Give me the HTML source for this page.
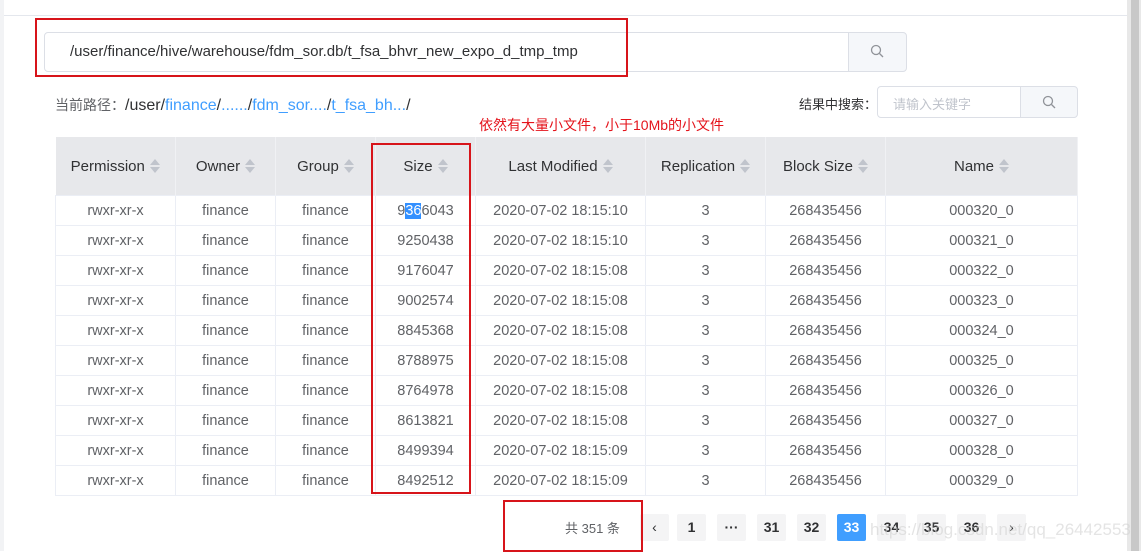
<!DOCTYPE html><html><head><meta charset="utf-8"><style>
body{margin:0;width:1141px;height:551px;overflow:hidden;background:#fff;font-family:"Liberation Sans","Noto Sans CJK SC",sans-serif;position:relative;color:#606266}
.a{position:absolute}
table{border-collapse:collapse;position:absolute;left:55px;top:137px;width:1022px;table-layout:fixed}
th{background:#e7e8eb;height:58px;font-weight:normal;color:#303133;font-size:15px;border-right:1px solid #f0f1f4;padding:0}
td{height:29px;border:1px solid #ebeef5;text-align:center;font-size:14.5px;color:#606266;padding:0}
.s{display:inline-block;width:10px;height:14px;vertical-align:middle;margin-left:5px;position:relative;top:-1px}
.s:before{content:"";position:absolute;left:0;top:0;border-left:5px solid transparent;border-right:5px solid transparent;border-bottom:6px solid #c0c4cc}
.s:after{content:"";position:absolute;left:0;top:8px;border-left:5px solid transparent;border-right:5px solid transparent;border-top:6px solid #c0c4cc}
.pg{position:absolute;top:514px;width:29px;height:27px;background:#f4f4f5;border-radius:2px;font-size:14px;font-weight:bold;color:#303133;text-align:center;line-height:27px}
.rb{position:absolute;border:2px solid #d7141a}
</style></head><body>
<div class="a" style="left:0;top:0;width:4px;height:551px;background:#f2f3f5"></div>
<div class="a" style="left:4px;top:15px;width:1123px;height:1px;background:#e4e7ed"></div>
<div class="a" style="left:1127px;top:0;width:14px;height:551px;background:#e8e8e8"></div>
<div class="a" style="left:1131px;top:0;width:8px;height:551px;background:#c8c8c8"></div>
<div class="a" style="left:44px;top:32px;width:803px;height:38px;border:1px solid #dcdfe6;border-radius:4px 0 0 4px"></div>
<div class="a" style="left:70px;top:43px;font-size:15px;color:#303133">/user/finance/hive/warehouse/fdm_sor.db/t_fsa_bhvr_new_expo_d_tmp_tmp</div>
<div class="a" style="left:848px;top:32px;width:57px;height:38px;border:1px solid #dcdfe6;background:#f5f7fa;border-radius:0 4px 4px 0"></div>
<svg class="a" style="left:870px;top:44px" width="14" height="14"><circle cx="6" cy="6" r="4.5" fill="none" stroke="#909399" stroke-width="1.3"/><path d="M9.5 9.5L13 13" stroke="#909399" stroke-width="1.3"/></svg>
<div class="a" style="left:55px;top:95px;font-size:14px;color:#606266">当前路径：<span style="font-size:16px;color:#303133">/user/<span style="color:#409eff">finance</span>/<span style="color:#409eff">......</span>/<span style="color:#409eff">fdm_sor....</span>/<span style="color:#409eff">t_fsa_bh...</span>/</span></div>
<div class="a" style="left:479px;top:115px;font-size:14px;color:#e4131b">依然有大量小文件，小于10Mb的小文件</div>
<div class="a" style="left:799px;top:94px;font-size:13px;color:#303133">结果中搜索：</div>
<div class="a" style="left:877px;top:86px;width:143px;height:30px;border:1px solid #dcdfe6;border-radius:4px 0 0 4px"></div>
<div class="a" style="left:893px;top:94px;font-size:13px;color:#c0c4cc">请输入关键字</div>
<div class="a" style="left:1020px;top:86px;width:56px;height:30px;border:1px solid #dcdfe6;background:#f5f7fa;border-radius:0 4px 4px 0"></div>
<svg class="a" style="left:1042px;top:95px" width="14" height="14"><circle cx="6" cy="6" r="4.5" fill="none" stroke="#909399" stroke-width="1.3"/><path d="M9.5 9.5L13 13" stroke="#909399" stroke-width="1.3"/></svg>
<table><colgroup><col style="width:120px"><col style="width:100px"><col style="width:100px"><col style="width:100px"><col style="width:170px"><col style="width:120px"><col style="width:120px"><col style="width:192px"></colgroup>
<tr><th>Permission<i class="s"></i></th><th>Owner<i class="s"></i></th><th>Group<i class="s"></i></th><th>Size<i class="s"></i></th><th>Last Modified<i class="s"></i></th><th>Replication<i class="s"></i></th><th>Block Size<i class="s"></i></th><th>Name<i class="s"></i></th></tr>
<tr><td>rwxr-xr-x</td><td>finance</td><td>finance</td><td>9<span style="background:#3390ff;color:#fff">36</span>6043</td><td>2020-07-02 18:15:10</td><td>3</td><td>268435456</td><td>000320_0</td></tr>
<tr><td>rwxr-xr-x</td><td>finance</td><td>finance</td><td>9250438</td><td>2020-07-02 18:15:10</td><td>3</td><td>268435456</td><td>000321_0</td></tr>
<tr><td>rwxr-xr-x</td><td>finance</td><td>finance</td><td>9176047</td><td>2020-07-02 18:15:08</td><td>3</td><td>268435456</td><td>000322_0</td></tr>
<tr><td>rwxr-xr-x</td><td>finance</td><td>finance</td><td>9002574</td><td>2020-07-02 18:15:08</td><td>3</td><td>268435456</td><td>000323_0</td></tr>
<tr><td>rwxr-xr-x</td><td>finance</td><td>finance</td><td>8845368</td><td>2020-07-02 18:15:08</td><td>3</td><td>268435456</td><td>000324_0</td></tr>
<tr><td>rwxr-xr-x</td><td>finance</td><td>finance</td><td>8788975</td><td>2020-07-02 18:15:08</td><td>3</td><td>268435456</td><td>000325_0</td></tr>
<tr><td>rwxr-xr-x</td><td>finance</td><td>finance</td><td>8764978</td><td>2020-07-02 18:15:08</td><td>3</td><td>268435456</td><td>000326_0</td></tr>
<tr><td>rwxr-xr-x</td><td>finance</td><td>finance</td><td>8613821</td><td>2020-07-02 18:15:08</td><td>3</td><td>268435456</td><td>000327_0</td></tr>
<tr><td>rwxr-xr-x</td><td>finance</td><td>finance</td><td>8499394</td><td>2020-07-02 18:15:09</td><td>3</td><td>268435456</td><td>000328_0</td></tr>
<tr><td>rwxr-xr-x</td><td>finance</td><td>finance</td><td>8492512</td><td>2020-07-02 18:15:09</td><td>3</td><td>268435456</td><td>000329_0</td></tr>
</table>
<div class="a" style="left:565px;top:518px;font-size:13px;color:#606266">共 351 条</div>
<div class="pg" style="left:640px;font-weight:normal">‹</div>
<div class="pg" style="left:677px">1</div>
<div class="pg" style="left:717px">···</div>
<div class="pg" style="left:757px">31</div>
<div class="pg" style="left:797px">32</div>
<div class="pg" style="left:837px;background:#409eff;color:#fff">33</div>
<div class="pg" style="left:877px">34</div>
<div class="pg" style="left:917px">35</div>
<div class="pg" style="left:957px">36</div>
<div class="pg" style="left:997px;font-weight:normal">›</div>
<div class="a" style="left:870px;top:520px;font-size:17px;color:rgba(210,210,210,0.6)">https://blog.csdn.net/qq_26442553</div>
<div class="rb" style="left:35px;top:18px;width:589px;height:55px"></div>
<div class="rb" style="left:371px;top:143px;width:96px;height:347px"></div>
<div class="rb" style="left:503px;top:500px;width:136px;height:48px"></div>
</body></html>
